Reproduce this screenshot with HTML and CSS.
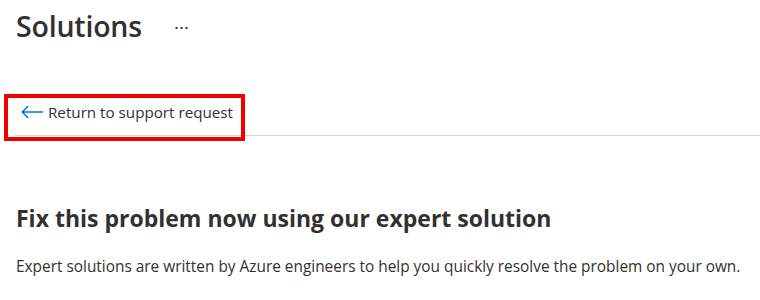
FILE: index.html
```html
<!DOCTYPE html>
<html>
<head>
<meta charset="utf-8">
<link rel="stylesheet" href="styles.css">
</head>
<body>
<div class="page">
  <header class="title-row">
    <h1 class="title">Solutions</h1>
    <span class="more">···</span>
  </header>
  <div class="toolbar">
    <a class="back">
      <svg class="arrow" width="24" height="16" viewBox="0 0 24 16"><path d="M23 8H2.2M8.2 2L2.2 8l6 6" fill="none" stroke="#0078d4" stroke-width="1.5"/></svg>
      <span>Return to support request</span>
    </a>
    <div class="highlight"></div>
  </div>
  <section class="content">
    <h2 class="heading">Fix this problem now using our expert solution</h2>
    <p class="desc">Expert solutions are written by Azure engineers to help you quickly resolve the problem on your own.</p>
  </section>
</div>
</body>
</html>
```
FILE: styles.css
```css
html, body { margin: 0; padding: 0; background: #fff; }
body { font-family: "Open Sans", "Noto Sans", sans-serif; color: #323130; }
.page { width: 760px; height: 300px; overflow: hidden; }
.title-row { display: flex; align-items: center; padding: 5px 0 0 16px; height: 41px; }
.title { margin: 0; font-size: 28.5px; font-weight: 600; line-height: 40px; letter-spacing: -0.2px; }
.more { margin-left: 32px; margin-top: 3px; font-size: 19px; color: #323130; }
.toolbar { position: relative; margin-top: 47px; margin-left: 15px; border-bottom: 1px solid #d6d6d6; height: 42px; }
.back { display: flex; align-items: center; gap: 4px; padding: 9px 0 0 5px; font-size: 15.2px; line-height: 20px; color: #323130; }
.arrow { display: block; }
.highlight { position: absolute; left: -11px; top: 1px; width: 233px; height: 39px; border: 4px solid #f20000; }
.content { padding: 67px 0 0 16px; }
.heading { margin: 0; font-size: 23px; font-weight: 700; line-height: 30px; }
.desc { margin: 24px 0 0; font-size: 15.4px; line-height: 20px; }
```
